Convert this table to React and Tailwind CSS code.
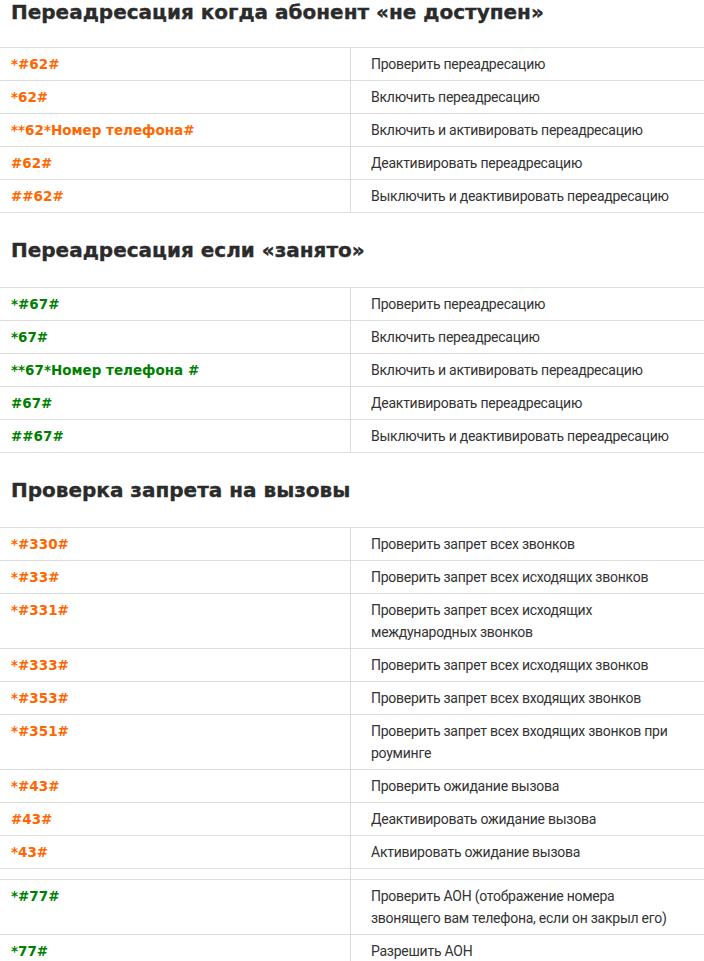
import React from 'react';

const ORANGE = 'text-[#ff6600]';
const GREEN = 'text-[#008000]';

const sections = [
  {
    title: 'Переадресация когда абонент «не доступен»',
    rows: [
      ['*#62#', 'Проверить переадресацию', 'o'],
      ['*62#', 'Включить переадресацию', 'o'],
      ['**62*Номер телефона#', 'Включить и активировать переадресацию', 'o'],
      ['#62#', 'Деактивировать переадресацию', 'o'],
      ['##62#', 'Выключить и деактивировать переадресацию', 'o'],
    ],
  },
  {
    title: 'Переадресация если «занято»',
    rows: [
      ['*#67#', 'Проверить переадресацию', 'g'],
      ['*67#', 'Включить переадресацию', 'g'],
      ['**67*Номер телефона #', 'Включить и активировать переадресацию', 'g'],
      ['#67#', 'Деактивировать переадресацию', 'g'],
      ['##67#', 'Выключить и деактивировать переадресацию', 'g'],
    ],
  },
  {
    title: 'Проверка запрета на вызовы',
    rows: [
      ['*#330#', 'Проверить запрет всех звонков', 'o'],
      ['*#33#', 'Проверить запрет всех исходящих звонков', 'o'],
      ['*#331#', 'Проверить запрет всех исходящих международных звонков', 'o'],
      ['*#333#', 'Проверить запрет всех исходящих звонков', 'o'],
      ['*#353#', 'Проверить запрет всех входящих звонков', 'o'],
      ['*#351#', 'Проверить запрет всех входящих звонков при роуминге', 'o'],
      ['*#43#', 'Проверить ожидание вызова', 'o'],
      ['#43#', 'Деактивировать ожидание вызова', 'o'],
      ['*43#', 'Активировать ожидание вызова', 'o'],
      ['', '', 'o'],
      ['*#77#', 'Проверить АОН (отображение номера звонящего вам телефона, если он закрыл его)', 'g'],
      ['*77#', 'Разрешить АОН', 'g'],
    ],
  },
];

function Row({ code, text, color }) {
  return (
    <div className="grid grid-cols-[351px_1fr] border-b border-[#dddddd]">
      <div
        className={`border-r border-[#dddddd] pl-[11px] py-[5px] text-[13.5px] leading-[22px] font-bold font-['DejaVu_Sans',sans-serif] ${color === 'g' ? GREEN : ORANGE}`}
      >
        {code}
      </div>
      <div className="pl-[20px] pr-[30px] py-[5px] text-[14px] leading-[22px] tracking-[-0.25px] text-[#333333] font-['Roboto',sans-serif]">
        {text}
      </div>
    </div>
  );
}

export default function App() {
  return (
    <div className="w-[704px] min-h-[961px] bg-white overflow-hidden">
      {sections.map((s, i) => (
        <section key={i}>
          <h2
            className={`pl-[11px] text-[20px] font-bold text-[#2b2b2b] [-webkit-text-stroke:0.35px_#2b2b2b] font-['DejaVu_Sans',sans-serif] ${
              i === 0 ? 'leading-[24px] mb-[23px]' : 'leading-[26px] mt-[24px] mb-[24px]'
            }`}
          >
            {s.title}
          </h2>
          <div className="border-t border-[#dddddd]">
            {s.rows.map((r, j) => (
              <Row key={j} code={r[0]} text={r[1]} color={r[2]} />
            ))}
          </div>
        </section>
      ))}
    </div>
  );
}
